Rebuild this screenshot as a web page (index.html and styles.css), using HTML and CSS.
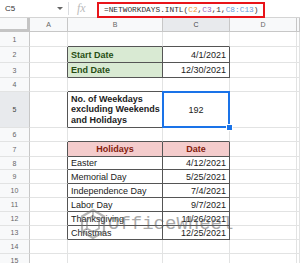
FILE: index.html
```html
<!DOCTYPE html>
<html lang="en">
<head>
    <meta charset="UTF-8">
    <title>NETWORKDAYS.INTL</title>
    <link rel="stylesheet" href="styles.css">
</head>
<body>
<div class="app">
    <div class="formula-bar">
        <div class="name-box">C5<span class="caret"></span></div>
        <div class="fx">fx</div>
        <div class="formula">=NETWORKDAYS.INTL(<span class="ref1">C2</span>,<span class="ref2">C3</span>,1,<span class="ref3">C8:C13</span>)</div>
    </div>

    <div class="sheet">
        <!-- column headers -->
        <div class="hd corner"></div><div class="hd">A</div><div class="hd">B</div><div class="hd sel">C</div><div class="hd">D</div><div class="hd"></div>
        <!-- 1 -->
        <div class="rn">1</div><div class="c"></div><div class="c db"></div><div class="c db"></div><div class="c"></div><div class="c"></div>
        <!-- 2 -->
        <div class="rn">2</div><div class="c dr"></div><div class="c t green">Start Date</div><div class="c t num">4/1/2021</div><div class="c"></div><div class="c"></div>
        <!-- 3 -->
        <div class="rn">3</div><div class="c dr"></div><div class="c t green">End Date</div><div class="c t num">12/30/2021</div><div class="c"></div><div class="c"></div>
        <!-- 4 -->
        <div class="rn">4</div><div class="c"></div><div class="c db"></div><div class="c db"></div><div class="c"></div><div class="c"></div>
        <!-- 5 -->
        <div class="rn sel">5</div><div class="c dr"></div><div class="c t bold wrap">No. of Weekdays<br>excluding Weekends<br>and Holidays</div><div class="c t mid active">192</div><div class="c"></div><div class="c"></div>
        <!-- 6 -->
        <div class="rn">6</div><div class="c"></div><div class="c db"></div><div class="c db"></div><div class="c"></div><div class="c"></div>
        <!-- 7 -->
        <div class="rn">7</div><div class="c dr"></div><div class="c t pink">Holidays</div><div class="c t pink">Date</div><div class="c"></div><div class="c"></div>
        <!-- 8 -->
        <div class="rn">8</div><div class="c dr"></div><div class="c t">Easter</div><div class="c t num">4/12/2021</div><div class="c"></div><div class="c"></div>
        <!-- 9 -->
        <div class="rn">9</div><div class="c dr"></div><div class="c t">Memorial Day</div><div class="c t num">5/25/2021</div><div class="c"></div><div class="c"></div>
        <!-- 10 -->
        <div class="rn">10</div><div class="c dr"></div><div class="c t">Independence Day</div><div class="c t num">7/4/2021</div><div class="c"></div><div class="c"></div>
        <!-- 11 -->
        <div class="rn">11</div><div class="c dr"></div><div class="c t">Labor Day</div><div class="c t num">9/7/2021</div><div class="c"></div><div class="c"></div>
        <!-- 12 -->
        <div class="rn">12</div><div class="c dr"></div><div class="c t">Thanksgiving</div><div class="c t num">11/26/2021</div><div class="c"></div><div class="c"></div>
        <!-- 13 -->
        <div class="rn">13</div><div class="c dr"></div><div class="c t">Christmas</div><div class="c t num">12/25/2021</div><div class="c"></div><div class="c"></div>
        <!-- 14 -->
        <div class="rn">14</div><div class="c"></div><div class="c"></div><div class="c"></div><div class="c"></div><div class="c"></div>
        <!-- 15 -->
        <div class="rn">15</div><div class="c"></div><div class="c"></div><div class="c"></div><div class="c"></div><div class="c"></div>
    </div>

    <div class="watermark">
        <svg class="wm-logo" width="26" height="32" viewBox="0 0 26 32">
            <path d="M13 2 L24 8.5 L24 23.5 L13 30 L2 23.5 L2 8.5 Z" fill="none" stroke="#6d6d6d" stroke-width="2.2"/>
            <path d="M13 8 L19 11.5 L19 20.5 L13 24 L7 20.5 L7 11.5 Z" fill="none" stroke="#6d6d6d" stroke-width="1.8"/>
            <path d="M13 2 L13 8 M24 8.5 L19 11.5 M2 23.5 L7 20.5" stroke="#6d6d6d" stroke-width="1.6"/>
        </svg>
        <span class="wm-text">OfficeWheel</span>
    </div>
</div>
</body>
</html>
```

FILE: styles.css
```css
body {
    margin: 0;
    background: #fff;
    font-family: "Liberation Sans", Arial, sans-serif;
    color: #222;
}

.app { position: relative; width: 300px; height: 263px; overflow: hidden; }

/* formula bar */
.formula-bar {
    display: flex;
    height: 18px;
    box-sizing: border-box;
    border-bottom: 1px solid #d4d4d4;
}
.name-box {
    width: 69px;
    box-sizing: border-box;
    border-right: 1px solid #dadce0;
    margin: 2px 0;
    padding-left: 5px;
    font-size: 8px;
    line-height: 13px;
    color: #333;
    position: relative;
}
.caret {
    position: absolute;
    right: 5px;
    top: 5px;
    border-left: 3px solid transparent;
    border-right: 3px solid transparent;
    border-top: 3px solid #666;
}
.fx {
    width: 28px;
    padding-left: 8px;
    box-sizing: border-box;
    font-family: "Liberation Serif", serif;
    font-style: italic;
    font-size: 12px;
    line-height: 17px;
    color: #bbb;
}
.formula {
    margin-top: 2px;
    width: 168px;
    height: 16px;
    box-sizing: border-box;
    border: 2px solid #e8141a;
    padding-left: 5px;
    font-family: "Liberation Mono", monospace;
    font-size: 7.8px;
    line-height: 12px;
    color: #333;
    white-space: nowrap;
}
.ref1 { color: #ec9b3b; }
.ref2 { color: #9a6bc4; }
.ref3 { color: #6a9ede; }

/* grid */
.sheet {
    display: grid;
    grid-template-columns: 30px 38px 95px 67px 67px 3px;
    grid-template-rows: 14px 15px 16px 15px 14px 36px 14px 15px 13px 14px 14px 14px 14px 14px 14px 14px;
}
.sheet > div {
    box-sizing: border-box;
    border-right: 1px solid #e2e3e3;
    border-bottom: 1px solid #e2e3e3;
    font-size: 9px;
    display: flex;
    align-items: center;
    white-space: nowrap;
    overflow: visible;
}
.sheet > .hd {
    background: #f8f9fa;
    border-color: #c7c7c7;
    justify-content: center;
    font-size: 7px;
    color: #666;
}
.sheet > .corner { border-right: 3px solid #c4c4c4; border-bottom: 3px solid #c4c4c4; }
.sheet > .rn {
    background: #f8f9fa;
    border-right-color: #c7c7c7;
    justify-content: center;
    font-size: 7px;
    color: #666;
}
.sheet > .sel { background: #e8eaed; color: #444; }

.sheet > .t { border-right-color: #555; border-bottom-color: #555; padding: 0 3px; }
.sheet > .dr { border-right-color: #555; }
.sheet > .db { border-bottom-color: #555; }

.sheet > .num { justify-content: flex-end; }
.sheet > .mid { justify-content: center; }
.sheet > .bold { font-weight: bold; }
.sheet > .wrap { line-height: 10.5px; }
.sheet > .green { background: #d9ead3; color: #274e13; font-weight: bold; }
.sheet > .pink { background: #f4cccc; color: #85200c; font-weight: bold; justify-content: center; }

.active { position: relative; }
.active::after {
    content: "";
    position: absolute;
    left: -1px;
    top: -1px;
    right: -1px;
    bottom: -1px;
    border: 2px solid #1a73e8;
}
.active::before {
    content: "";
    position: absolute;
    right: -4px;
    bottom: -4px;
    width: 5px;
    height: 5px;
    background: #1a73e8;
    border: 1px solid #fff;
    z-index: 1;
}

/* watermark */
.watermark {
    position: absolute;
    left: 80px;
    top: 208px;
    display: flex;
    align-items: center;
    gap: 2px;
    opacity: 0.5;
    pointer-events: none;
}
.wm-text {
    font-family: "Liberation Mono", monospace;
    font-size: 19px;
    color: #555;
    letter-spacing: 0;
}
```
